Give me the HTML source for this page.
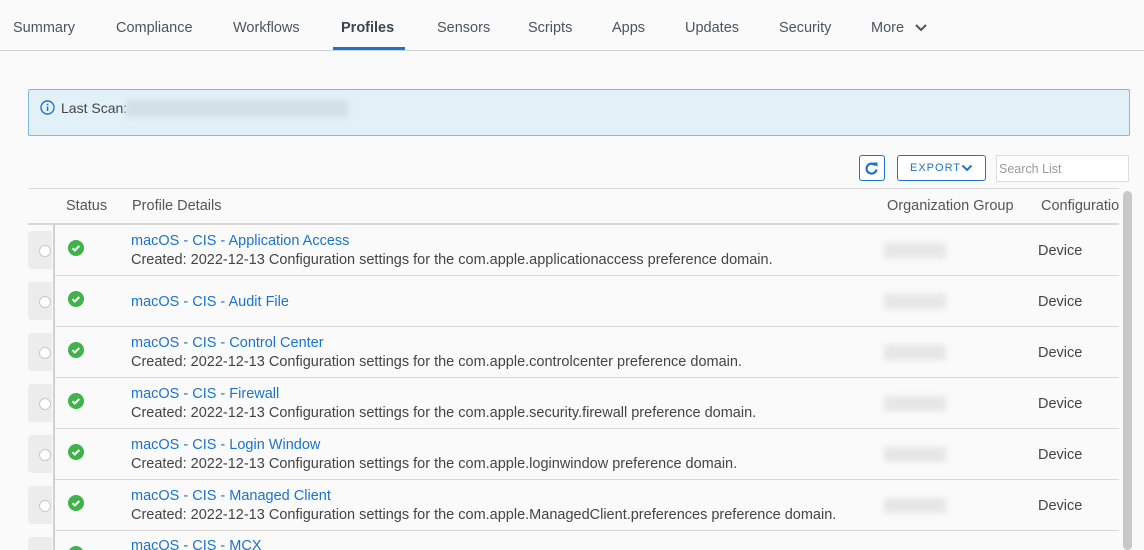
<!DOCTYPE html>
<html><head><style>
*{margin:0;padding:0;box-sizing:border-box}
html,body{width:1144px;height:550px;overflow:hidden}
body{background:#fafafa;font-family:"Liberation Sans",sans-serif;position:relative;color:#333}
.a{position:absolute;white-space:nowrap}
.tab{position:absolute;top:20px;font-size:14.5px;color:#4a5560}
.nav{position:absolute;left:0;top:0;width:1144px;height:51px;border-bottom:1px solid #c9d3dc;background:#fafafa}
.row{position:absolute;left:54px;width:1065px;height:51px;border-bottom:1px solid #d8d8d8}
.cell{position:absolute;left:28px;width:24px;height:38px;background:#ececec;border-radius:4px 0 0 4px}
.rad{position:absolute;left:39px;width:12px;height:12px;border-radius:50%;background:#fff;border:1px solid #c8c8c8}
.ok{position:absolute;left:68px;width:16px;height:16px}
.t1{position:absolute;left:131px;font-size:14.5px;color:#1b74c8}
.t2{position:absolute;left:131px;font-size:14.5px;color:#444}
.blur{position:absolute;left:884px;width:62px;height:15px;background:#e6e6e6;filter:blur(3px)}
.dev{position:absolute;left:1038px;font-size:14.5px;color:#444}
</style></head><body>
<div class="nav"></div>
<div class="tab" style="left:13px">Summary</div>
<div class="tab" style="left:116px">Compliance</div>
<div class="tab" style="left:233px">Workflows</div>
<div class="tab" style="left:341px;font-weight:bold;color:#3a4550">Profiles</div>
<div class="a" style="left:333px;top:47px;width:72px;height:3px;background:#1f74c8"></div>
<div class="tab" style="left:437px">Sensors</div>
<div class="tab" style="left:528px">Scripts</div>
<div class="tab" style="left:612px">Apps</div>
<div class="tab" style="left:685px">Updates</div>
<div class="tab" style="left:779px">Security</div>
<div class="tab" style="left:871px">More</div>
<svg class="a" style="left:914px;top:22px" width="14" height="12"><path d="M2 3l5 5 5-5" stroke="#4a5560" stroke-width="2" fill="none"/></svg>

<div class="a" style="left:28px;top:89px;width:1102px;height:47px;background:#e1f1f7;border:1px solid #7fb9dd;border-radius:2px"></div>
<svg class="a" style="left:40px;top:100px" width="15" height="15"><circle cx="7.5" cy="7.5" r="6.5" stroke="#1f74c8" stroke-width="1.4" fill="none"/><rect x="6.8" y="6.5" width="1.5" height="4.5" fill="#1f74c8"/><rect x="6.8" y="3.8" width="1.5" height="1.5" fill="#1f74c8"/></svg>
<div class="a" style="left:61px;top:100px;font-size:14px;color:#444">Last Scan:</div>
<div class="a" style="left:126px;top:100px;width:222px;height:17px;background:#d0e0e6;filter:blur(3px)"></div>

<div class="a" style="left:859px;top:155px;width:26px;height:26px;border:1px solid #1f74c8;border-radius:3px;background:#fff"></div>
<svg class="a" style="left:864px;top:160px" width="16" height="16"><path d="M11.5 5.5A5 5 0 1 0 12.5 9.5" stroke="#1f74c8" stroke-width="2.2" fill="none"/><path d="M9 2.5h4.5V7z" fill="#1f74c8"/></svg>
<div class="a" style="left:897px;top:155px;width:89px;height:26px;border:1px solid #1f74c8;border-radius:3px;background:#fff"></div>
<div class="a" style="left:910px;top:162px;font-size:11px;letter-spacing:1px;color:#1f74c8">EXPORT</div>
<svg class="a" style="left:961px;top:163px" width="12" height="10"><path d="M1.5 2.5l4.5 4.5 4.5-4.5" stroke="#1f74c8" stroke-width="2" fill="none"/></svg>
<div class="a" style="left:996px;top:155px;width:133px;height:27px;border:1px solid #ddd;background:#fff"></div>
<div class="a" style="left:999px;top:162px;font-size:12.5px;color:#999">Search List</div>

<div class="a" style="left:28px;top:188px;width:1091px;height:1px;background:#d8d8d8"></div>
<div class="a" style="left:66px;top:198px;font-size:14.5px;color:#555">Status</div>
<div class="a" style="left:132px;top:198px;font-size:14.5px;color:#555">Profile Details</div>
<div class="a" style="left:887px;top:198px;font-size:14.5px;color:#555">Organization Group</div>
<div class="a" style="left:1041px;top:198px;font-size:14.5px;color:#555;width:78px;overflow:hidden">Configuration</div>
<div class="a" style="left:28px;top:223px;width:1091px;height:2px;background:#d8d8d8"></div>
<div class="a" style="left:53px;top:225px;width:2px;height:325px;background:#d0d0d0"></div>
<div class="a" style="left:1123px;top:191px;width:9px;height:359px;background:#c8c8c8;border-radius:5px"></div>

<div class="row" style="top:225px"></div>
<div class="cell" style="top:231px"></div><div class="rad" style="top:245px"></div>
<svg class="ok" style="top:240px" viewBox="0 0 16 16"><circle cx="8" cy="8" r="8" fill="#3fb24a"/><path d="M4.5 8.2l2.3 2.3 4.5-4.5" stroke="#fff" stroke-width="2" fill="none"/></svg>
<div class="t1" style="top:233px">macOS - CIS - Application Access</div>
<div class="t2" style="top:252px">Created: 2022-12-13 Configuration settings for the com.apple.applicationaccess preference domain.</div>
<div class="blur" style="top:243px"></div><div class="dev" style="top:243px">Device</div>

<div class="row" style="top:276px"></div>
<div class="cell" style="top:282px"></div><div class="rad" style="top:296px"></div>
<svg class="ok" style="top:291px" viewBox="0 0 16 16"><circle cx="8" cy="8" r="8" fill="#3fb24a"/><path d="M4.5 8.2l2.3 2.3 4.5-4.5" stroke="#fff" stroke-width="2" fill="none"/></svg>
<div class="t1" style="top:294px">macOS - CIS - Audit File</div>
<div class="blur" style="top:294px"></div><div class="dev" style="top:294px">Device</div>

<div class="row" style="top:327px"></div>
<div class="cell" style="top:333px"></div><div class="rad" style="top:347px"></div>
<svg class="ok" style="top:342px" viewBox="0 0 16 16"><circle cx="8" cy="8" r="8" fill="#3fb24a"/><path d="M4.5 8.2l2.3 2.3 4.5-4.5" stroke="#fff" stroke-width="2" fill="none"/></svg>
<div class="t1" style="top:335px">macOS - CIS - Control Center</div>
<div class="t2" style="top:354px">Created: 2022-12-13 Configuration settings for the com.apple.controlcenter preference domain.</div>
<div class="blur" style="top:345px"></div><div class="dev" style="top:345px">Device</div>

<div class="row" style="top:378px"></div>
<div class="cell" style="top:384px"></div><div class="rad" style="top:398px"></div>
<svg class="ok" style="top:393px" viewBox="0 0 16 16"><circle cx="8" cy="8" r="8" fill="#3fb24a"/><path d="M4.5 8.2l2.3 2.3 4.5-4.5" stroke="#fff" stroke-width="2" fill="none"/></svg>
<div class="t1" style="top:386px">macOS - CIS - Firewall</div>
<div class="t2" style="top:405px">Created: 2022-12-13 Configuration settings for the com.apple.security.firewall preference domain.</div>
<div class="blur" style="top:396px"></div><div class="dev" style="top:396px">Device</div>

<div class="row" style="top:429px"></div>
<div class="cell" style="top:435px"></div><div class="rad" style="top:449px"></div>
<svg class="ok" style="top:444px" viewBox="0 0 16 16"><circle cx="8" cy="8" r="8" fill="#3fb24a"/><path d="M4.5 8.2l2.3 2.3 4.5-4.5" stroke="#fff" stroke-width="2" fill="none"/></svg>
<div class="t1" style="top:437px">macOS - CIS - Login Window</div>
<div class="t2" style="top:456px">Created: 2022-12-13 Configuration settings for the com.apple.loginwindow preference domain.</div>
<div class="blur" style="top:447px"></div><div class="dev" style="top:447px">Device</div>

<div class="row" style="top:480px"></div>
<div class="cell" style="top:486px"></div><div class="rad" style="top:500px"></div>
<svg class="ok" style="top:495px" viewBox="0 0 16 16"><circle cx="8" cy="8" r="8" fill="#3fb24a"/><path d="M4.5 8.2l2.3 2.3 4.5-4.5" stroke="#fff" stroke-width="2" fill="none"/></svg>
<div class="t1" style="top:488px">macOS - CIS - Managed Client</div>
<div class="t2" style="top:507px">Created: 2022-12-13 Configuration settings for the com.apple.ManagedClient.preferences preference domain.</div>
<div class="blur" style="top:498px"></div><div class="dev" style="top:498px">Device</div>

<div class="cell" style="top:537px"></div>
<svg class="ok" style="top:546px" viewBox="0 0 16 16"><circle cx="8" cy="8" r="8" fill="#3fb24a"/></svg>
<div class="t1" style="top:538px">macOS - CIS - MCX</div>
</body></html>
